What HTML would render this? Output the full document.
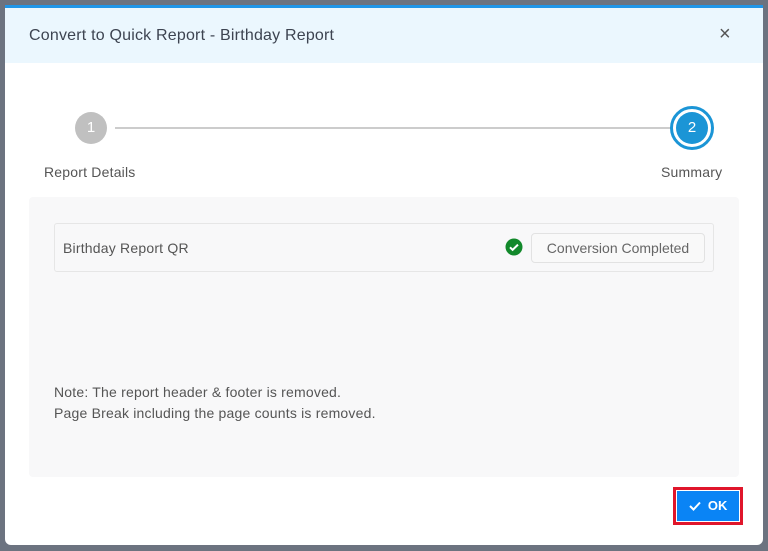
<!DOCTYPE html>
<html><head><style>
*{margin:0;padding:0;box-sizing:border-box}
body{width:768px;height:551px;background:#6c7380;font-family:"Liberation Sans",sans-serif;position:relative;overflow:hidden}
.m{position:absolute;left:5px;top:5px;width:758px;height:540px;background:#fff;border-radius:0 0 6px 6px;border-top:3px solid #2196e8;overflow:hidden}
.h{position:absolute;left:0;top:0;width:100%;height:55px;background:#ebf7fe}
.t{position:absolute;left:24px;top:19px;font-size:16px;color:#3d4451;letter-spacing:0.2px}
.x{position:absolute;left:714px;top:15px;font-size:20px;color:#555}
.c1{position:absolute;left:70px;top:104px;width:32px;height:32px;border-radius:50%;background:#c0c0c0;color:#fff;text-align:center;line-height:32px;font-size:15px}
.ln{position:absolute;left:110px;top:119px;width:558px;height:2px;background:#ccc}
.c2{position:absolute;left:665px;top:98px;width:44px;height:44px;border-radius:50%;border:3px solid #1b95d6;background:#fff}
.c2 div{position:absolute;left:3px;top:3px;width:32px;height:32px;border-radius:50%;background:#1b95d6;color:#fff;text-align:center;line-height:32px;font-size:15px}
.l{position:absolute;font-size:14px;color:#555;letter-spacing:0.2px}
.p{position:absolute;left:24px;top:189px;width:710px;height:280px;background:#f8f8f9;border-radius:4px}
.r{position:absolute;left:25px;top:26px;width:660px;height:49px;border:1px solid #e6e6e6;border-radius:3px}
.b{position:absolute;left:476px;top:9px;width:174px;height:30px;border:1px solid #e2e2e2;border-radius:4px;background:#f9f9f9;font-size:14px;color:#666;text-align:center;line-height:28px}
.ok{position:absolute;left:668px;top:479px;width:70px;height:38px;border:3px solid #e0162b;padding:1px}
.ok div{width:100%;height:100%;background:#0a84f5;color:#fff;font-weight:bold;font-size:13px;line-height:30px;text-align:center}
</style></head><body>
<div class="m">
<div class="h"><div class="t">Convert to Quick Report - Birthday Report</div><div class="x">×</div></div>
<div class="c1">1</div><div class="ln"></div>
<div class="c2"><div>2</div></div>
<div class="l" style="left:39px;top:156px">Report Details</div>
<div class="l" style="left:656px;top:156px">Summary</div>
<div class="p">
<div class="r">
<div class="l" style="left:8px;top:16px">Birthday Report QR</div>
<svg style="position:absolute;left:450px;top:14px" width="18" height="18" viewBox="0 0 18 18"><circle cx="9" cy="9" r="8.5" fill="#12892b"/><path d="M5 9.3l2.6 2.5L13 6.6" stroke="#fff" stroke-width="2" fill="none"/></svg>
<div class="b">Conversion Completed</div>
</div>
<div class="l" style="left:25px;top:185px;line-height:21px">Note: The report header &amp; footer is removed.<br>Page Break including the page counts is removed.</div>
</div>
<div class="ok"><div><svg width="12" height="10" viewBox="0 0 12 10" style="vertical-align:-1px"><path d="M1 5l3.5 3.5L11 1.5" stroke="#fff" stroke-width="2" fill="none"/></svg>&nbsp; OK</div></div>
</div>
</body></html>
